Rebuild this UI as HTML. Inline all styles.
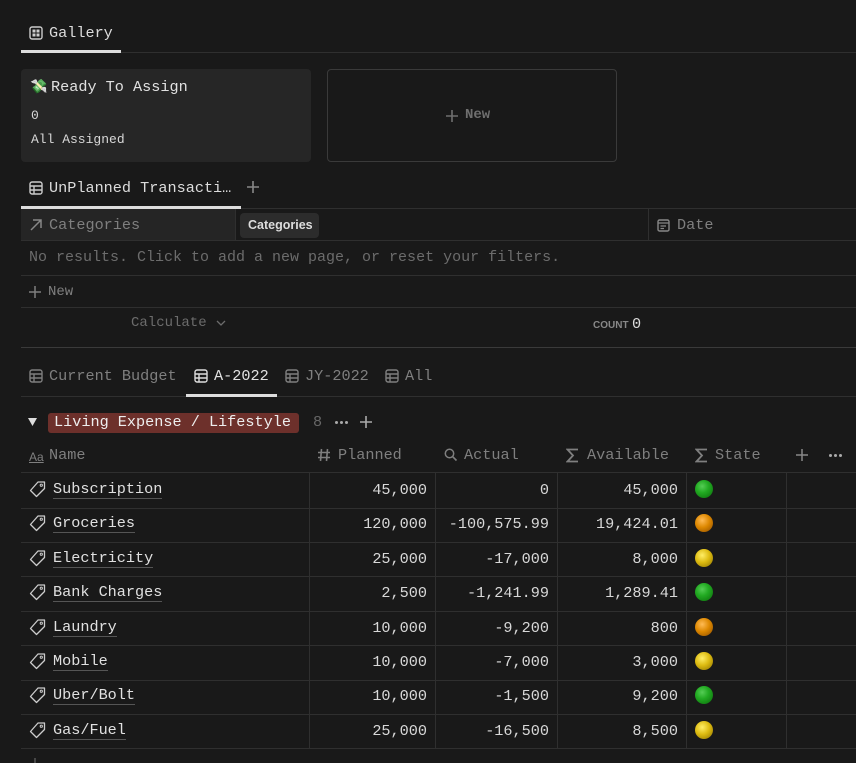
<!DOCTYPE html>
<html><head><meta charset="utf-8"><style>
*{margin:0;padding:0;box-sizing:border-box}
html,body{width:856px;height:763px;overflow:hidden}
body{background:#191919;color:#d8d8d8;font-family:"Liberation Mono",monospace;font-size:15.2px;position:relative}
.a{position:absolute;white-space:nowrap;line-height:18px}
.hl{position:absolute;height:1px;background:#2f2f2f}
.vl{position:absolute;width:1px;background:#2f2f2f}
.g{color:#7f7f7f}
.r{text-align:right}
.u{border-bottom:1px solid #555;line-height:17px}
.dot{position:absolute;width:18px;height:18px;border-radius:50%}
.gr{background:radial-gradient(circle at 40% 35%,#5c5 0,#2a2 40%,#0a6a0a 100%)}
.or{background:radial-gradient(circle at 40% 35%,#fb5 0,#d80 45%,#8a4a00 100%)}
.ye{background:radial-gradient(circle at 40% 35%,#fe6 0,#db1 45%,#8a7000 100%)}
.dots{position:absolute;display:flex;gap:2px}
.dots i{width:3px;height:3px;border-radius:50%;background:#aaa;display:block}
.plus{position:absolute}
svg{position:absolute}
</style></head><body>

<svg style="left:29px;top:26px" width="14" height="14" viewBox="0 0 14 14"><rect x="1" y="1" width="12" height="12" rx="2" fill="none" stroke="#ccc" stroke-width="1.4"/><rect x="3.5" y="3.5" width="3" height="3" fill="#ccc"/><rect x="7.5" y="3.5" width="3" height="3" fill="#ccc"/><rect x="3.5" y="7.5" width="3" height="3" fill="#ccc"/><rect x="7.5" y="7.5" width="3" height="3" fill="#ccc"/></svg>
<div class="a" style="left:49px;top:24px;color:#dcdcdc">Gallery</div>
<div class="hl" style="left:21px;top:52px;width:835px"></div>
<div style="position:absolute;left:21px;top:50px;width:100px;height:3px;background:#ddd"></div>

<div style="position:absolute;left:21px;top:69px;width:290px;height:93px;background:#262626;border-radius:4px"></div>
<div class="a" style="left:30px;top:79px;font-size:14px">💸</div>
<div class="a" style="left:51px;top:78px;color:#e0e0e0">Ready To Assign</div>
<div class="a" style="left:31px;top:107px;font-size:13px">0</div>
<div class="a" style="left:31px;top:131px;font-size:13px">All Assigned</div>
<div style="position:absolute;left:327px;top:69px;width:290px;height:93px;border:1px solid #3a3a3a;border-radius:4px"></div>
<svg style="left:446px;top:110px" width="12" height="12" viewBox="0 0 12 12"><path d="M6 0V12M0 6H12" stroke="#6f6f6f" stroke-width="1.6"/></svg>
<div class="a" style="left:465px;top:106px;font-size:14px;font-weight:bold;color:#6f6f6f">New</div>

<svg style="left:29px;top:181px" width="14" height="14" viewBox="0 0 14 14"><rect x="1" y="1" width="12" height="12" rx="2" fill="none" stroke="#ccc" stroke-width="1.4"/><path d="M1 5H13M1 9H13M5 5V13" stroke="#ccc" stroke-width="1.4"/></svg>
<div class="a" style="left:49px;top:179px;color:#dcdcdc">UnPlanned Transacti…</div>
<svg style="left:247px;top:181px" width="12" height="12" viewBox="0 0 12 12"><path d="M6 0V12M0 6H12" stroke="#888" stroke-width="1.6"/></svg>
<div class="hl" style="left:21px;top:208px;width:835px"></div>
<div style="position:absolute;left:21px;top:206px;width:220px;height:3px;background:#ddd"></div>
<div style="position:absolute;left:21px;top:209px;width:214px;height:31px;background:#252525"></div>
<svg style="left:29px;top:218px" width="14" height="14" viewBox="0 0 14 14"><path d="M2 12L12 2M4 2H12V10" fill="none" stroke="#888" stroke-width="1.5"/></svg>
<div class="a g" style="left:49px;top:216px">Categories</div>
<div class="vl" style="left:235px;top:209px;height:31px"></div>
<div style="position:absolute;left:240px;top:213px;width:79px;height:25px;background:#2c2c2c;border-radius:4px"></div>
<div class="a" style="left:248px;top:216px;font-family:'Liberation Sans',sans-serif;font-size:12.5px;font-weight:bold;color:#ddd">Categories</div>
<div class="vl" style="left:648px;top:209px;height:31px"></div>
<svg style="left:657px;top:218px" width="13" height="14" viewBox="0 0 13 14"><rect x="1" y="2" width="11" height="11" rx="1.5" fill="none" stroke="#888" stroke-width="1.4"/><path d="M1 5H12M3.5 8H9M3.5 10.5H7" stroke="#888" stroke-width="1.3"/></svg>
<div class="a g" style="left:677px;top:216px">Date</div>
<div class="hl" style="left:21px;top:240px;width:835px"></div>
<div class="a" style="left:29px;top:249px;color:#6c6c6c;font-size:15px">No results. Click to add a new page, or reset your filters.</div>
<div class="hl" style="left:21px;top:275px;width:835px"></div>
<svg style="left:29px;top:286px" width="12" height="12" viewBox="0 0 12 12"><path d="M6 0V12M0 6H12" stroke="#7f7f7f" stroke-width="1.5"/></svg>
<div class="a g" style="left:48px;top:283px;font-size:14px">New</div>
<div class="hl" style="left:21px;top:307px;width:835px"></div>
<div class="a" style="left:131px;top:314px;color:#6c6c6c;font-size:14px">Calculate</div>
<svg style="left:216px;top:319px" width="10" height="8" viewBox="0 0 10 8"><path d="M1 2L5 6L9 2" fill="none" stroke="#6c6c6c" stroke-width="1.3"/></svg>
<div class="a" style="left:593px;top:317px;font-family:'Liberation Sans',sans-serif;font-size:10px;font-weight:bold;color:#888">COUNT</div>
<div class="a" style="left:632px;top:315px;color:#ddd">0</div>
<div class="hl" style="left:21px;top:347px;width:835px;background:#3a3a3a"></div>

<svg style="left:29px;top:369px" width="14" height="14" viewBox="0 0 14 14"><rect x="1" y="1" width="12" height="12" rx="2" fill="none" stroke="#7f7f7f" stroke-width="1.4"/><path d="M1 5H13M1 9H13M5 5V13" stroke="#7f7f7f" stroke-width="1.4"/></svg>
<div class="a g" style="left:49px;top:367px">Current Budget</div>
<svg style="left:194px;top:369px" width="14" height="14" viewBox="0 0 14 14"><rect x="1" y="1" width="12" height="12" rx="2" fill="none" stroke="#ddd" stroke-width="1.4"/><path d="M1 5H13M1 9H13M5 5V13" stroke="#ddd" stroke-width="1.4"/></svg>
<div class="a" style="left:214px;top:367px;color:#e0e0e0">A-2022</div>
<svg style="left:285px;top:369px" width="14" height="14" viewBox="0 0 14 14"><rect x="1" y="1" width="12" height="12" rx="2" fill="none" stroke="#7f7f7f" stroke-width="1.4"/><path d="M1 5H13M1 9H13M5 5V13" stroke="#7f7f7f" stroke-width="1.4"/></svg>
<div class="a g" style="left:305px;top:367px">JY-2022</div>
<svg style="left:385px;top:369px" width="14" height="14" viewBox="0 0 14 14"><rect x="1" y="1" width="12" height="12" rx="2" fill="none" stroke="#7f7f7f" stroke-width="1.4"/><path d="M1 5H13M1 9H13M5 5V13" stroke="#7f7f7f" stroke-width="1.4"/></svg>
<div class="a g" style="left:405px;top:367px">All</div>
<div class="hl" style="left:21px;top:396px;width:835px"></div>
<div style="position:absolute;left:186px;top:394px;width:91px;height:3px;background:#ddd"></div>

<svg style="left:28px;top:418px" width="9" height="8" viewBox="0 0 9 8"><path d="M0 0H9L4.5 8Z" fill="#ddd"/></svg>
<div style="position:absolute;left:48px;top:413px;width:251px;height:20px;background:#6d302b;border-radius:3px"></div>
<div class="a" style="left:54px;top:413px;color:#eee">Living Expense / Lifestyle</div>
<div class="a" style="left:313px;top:413px;color:#666">8</div>
<div class="dots" style="left:335px;top:421px"><i></i><i></i><i></i></div>
<svg style="left:360px;top:416px" width="12" height="12" viewBox="0 0 12 12"><path d="M6 0V12M0 6H12" stroke="#aaa" stroke-width="1.6"/></svg>

<div class="a g" style="left:29px;top:448px;font-family:'Liberation Sans',sans-serif;font-size:12px;text-decoration:underline">Aa</div>
<div class="a g" style="left:49px;top:446px">Name</div>
<svg style="left:317px;top:448px" width="14" height="14" viewBox="0 0 14 14"><path d="M4.5 1L3.5 13M10.5 1L9.5 13M1 4.5H13M1 9.5H13" stroke="#7f7f7f" stroke-width="1.6"/></svg>
<div class="a g" style="left:338px;top:446px">Planned</div>
<svg style="left:444px;top:448px" width="14" height="14" viewBox="0 0 14 14"><circle cx="5.5" cy="5.5" r="4.2" fill="none" stroke="#7f7f7f" stroke-width="1.5"/><path d="M8.6 8.6L12.5 12.5" stroke="#7f7f7f" stroke-width="1.6"/></svg>
<div class="a g" style="left:464px;top:446px">Actual</div>
<svg style="left:566px;top:448px" width="13" height="15" viewBox="0 0 13 15"><path d="M12 1.5H1.5L7 7.5L1.5 13.5H12" fill="none" stroke="#7f7f7f" stroke-width="1.8"/></svg>
<div class="a g" style="left:587px;top:446px">Available</div>
<svg style="left:695px;top:448px" width="13" height="15" viewBox="0 0 13 15"><path d="M12 1.5H1.5L7 7.5L1.5 13.5H12" fill="none" stroke="#7f7f7f" stroke-width="1.8"/></svg>
<div class="a g" style="left:715px;top:446px">State</div>
<svg style="left:796px;top:449px" width="12" height="12" viewBox="0 0 12 12"><path d="M6 0V12M0 6H12" stroke="#888" stroke-width="1.5"/></svg>
<div class="dots" style="left:829px;top:454px"><i></i><i></i><i></i></div>
<div class="hl" style="left:21px;top:472px;width:835px"></div>

<div class="vl" style="left:309px;top:473px;height:275px"></div>
<div class="vl" style="left:435px;top:473px;height:275px"></div>
<div class="vl" style="left:557px;top:473px;height:275px"></div>
<div class="vl" style="left:686px;top:473px;height:275px"></div>
<div class="vl" style="left:786px;top:473px;height:275px"></div>

<div id="rows"></div>
<svg style="left:29px;top:758px" width="12" height="12" viewBox="0 0 12 12"><path d="M6 0V12M0 6H12" stroke="#555" stroke-width="1.5"/></svg>
<script>
var d=[["Subscription","45,000","0","45,000","gr"],["Groceries","120,000","-100,575.99","19,424.01","or"],["Electricity","25,000","-17,000","8,000","ye"],["Bank Charges","2,500","-1,241.99","1,289.41","gr"],["Laundry","10,000","-9,200","800","or"],["Mobile","10,000","-7,000","3,000","ye"],["Uber/Bolt","10,000","-1,500","9,200","gr"],["Gas/Fuel","25,000","-16,500","8,500","ye"]];
var h="";
d.forEach(function(r,i){var c=490+i*34.4;var t=c-9;
h+='<svg style="left:28px;top:'+(c-10)+'px" width="19" height="19" viewBox="0 0 19 19"><path d="M10 2H16.5V8.5L8.5 16.5L2.5 10.5Z" fill="none" stroke="#ccc" stroke-width="1.3" stroke-linejoin="round"/><circle cx="13.3" cy="5.2" r="1.1" fill="none" stroke="#ccc" stroke-width="1"/></svg>';
h+='<div class="a u" style="left:53px;top:'+t+'px;color:#e0e0e0">'+r[0]+'</div>';
h+='<div class="a r" style="left:310px;width:117px;top:'+t+'px">'+r[1]+'</div>';
h+='<div class="a r" style="left:436px;width:113px;top:'+t+'px">'+r[2]+'</div>';
h+='<div class="a r" style="left:558px;width:120px;top:'+t+'px">'+r[3]+'</div>';
h+='<div class="dot '+r[4]+'" style="left:695px;top:'+(c-10)+'px"></div>';
h+='<div class="hl" style="left:21px;width:835px;top:'+Math.round(c+17.5)+'px"></div>';});
document.getElementById("rows").outerHTML=h;
</script>
</body></html>
